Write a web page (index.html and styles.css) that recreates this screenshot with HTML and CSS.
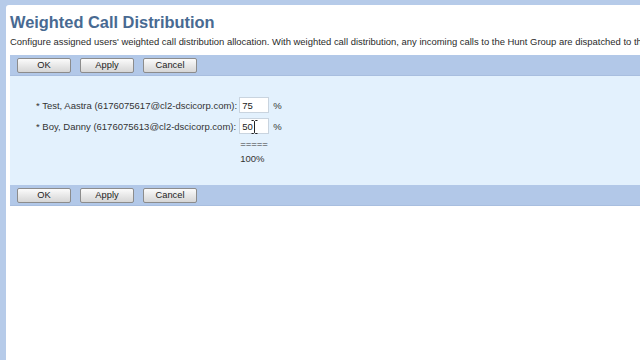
FILE: index.html
```html
<!DOCTYPE html>
<html lang="en">
<head>
  <meta charset="UTF-8">
  <title>Weighted Call Distribution</title>
  <link rel="stylesheet" href="styles.css">
</head>
<body>
  <div class="frame">
    <h1 class="title">Weighted Call Distribution</h1>
    <p class="desc">Configure assigned users' weighted call distribution allocation. With weighted call distribution, any incoming calls to the Hunt Group are dispatched to the agents based on their assigned weight.</p>

    <!-- Top button bar -->
    <div class="toolbar">
      <button class="btn">OK</button>
      <button class="btn">Apply</button>
      <button class="btn">Cancel</button>
    </div>

    <!-- Weight allocation -->
    <div class="content">
      <div class="weights">
        <label class="name" for="w1">* Test, Aastra (6176075617@cl2-dscicorp.com):</label>
        <input class="weight" id="w1" type="text" value="75">
        <span class="pct">%</span>

        <label class="name" for="w2">* Boy, Danny (6176075613@cl2-dscicorp.com):</label>
        <span class="field">
          <input class="weight" id="w2" type="text" value="50">
          <svg class="ibeam" width="7" height="14" viewBox="0 0 7 14">
            <path d="M0.5 0.5h2l1 1 1-1h2M3.5 1.5v11M0.5 13.5h2l1-1 1 1h2" fill="none" stroke="#222" stroke-width="1"/>
          </svg>
        </span>
        <span class="pct">%</span>

        <span></span>
        <span class="sum">=====</span>
        <span></span>

        <span></span>
        <span class="sum">100%</span>
        <span></span>
      </div>
    </div>

    <!-- Bottom button bar -->
    <div class="toolbar">
      <button class="btn">OK</button>
      <button class="btn">Apply</button>
      <button class="btn">Cancel</button>
    </div>
  </div>
</body>
</html>
```

FILE: styles.css
```css
body {
  margin: 0;
  background-color: #b6cbe9;
  font-family: "Liberation Sans", Arial, sans-serif;
  overflow: hidden;
}

.frame {
  margin: 5px 0 0 6px;
  padding-left: 4px;
  background-color: #fff;
  min-height: 355px;
  border-top-left-radius: 3px;
  overflow: hidden;
}

.title {
  margin: 0;
  padding-top: 7px;
  font-size: 16.4px;
  line-height: 20px;
  font-weight: bold;
  color: #486a92;
  white-space: nowrap;
}

.desc {
  margin: 4px 0 0 0;
  font-size: 9.45px;
  line-height: 12px;
  color: #2a2a2a;
  white-space: nowrap;
}

.toolbar {
  display: flex;
  gap: 9px;
  align-items: center;
  height: 21px;
  padding-left: 7px;
  background-color: #b2c8e8;
  border-bottom: 1px solid #a8bedf;
  box-sizing: border-box;
}

.desc + .toolbar {
  margin-top: 7px;
}

.btn {
  width: 54px;
  height: 15px;
  padding: 0;
  font-family: inherit;
  font-size: 9.3px;
  color: #222;
  background: linear-gradient(#fbfbfb, #e6e6e6 55%, #d6d6d6);
  border: 1px solid #8c8c8c;
  border-radius: 2px;
}

.content {
  background-color: #e3f1fd;
  height: 109px;
  padding: 21px 0 0 26px;
  box-sizing: border-box;
}

.weights {
  display: grid;
  grid-template-columns: auto auto auto;
  justify-content: start;
  align-items: center;
  column-gap: 2px;
  row-gap: 5px;
  font-size: 9.5px;
  color: #333;
}

.field {
  position: relative;
  display: block;
}

.weight {
  display: block;
  width: 30px;
  height: 16px;
  box-sizing: border-box;
  margin: 0;
  padding: 0 0 0 2px;
  border: 1px solid #c9d4df;
  background-color: #fff;
  font-family: inherit;
  font-size: 9.5px;
  color: #222;
}

.ibeam {
  position: absolute;
  left: 12px;
  top: 2px;
}

.pct {
  padding-left: 2px;
}

.sum {
  line-height: 10px;
  padding-left: 1px;
}
```
